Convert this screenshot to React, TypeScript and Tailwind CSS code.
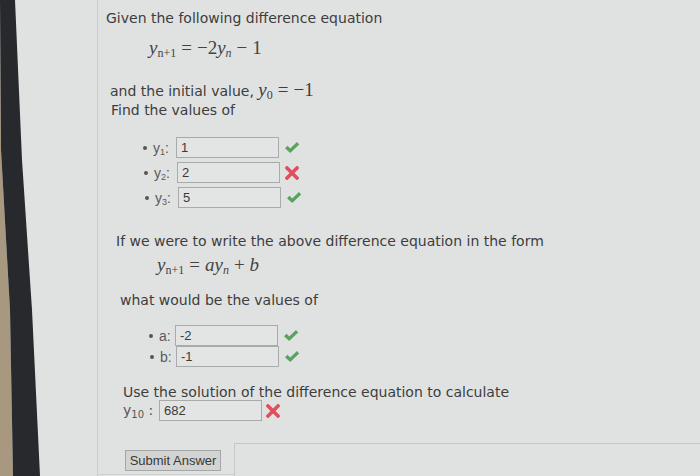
import React from "react";

const sans = "font-['DejaVu_Sans','Liberation_Sans',sans-serif]";
const arial = "font-['Liberation_Sans','DejaVu_Sans',sans-serif]";
const serif = "font-['Liberation_Serif','DejaVu_Serif',serif] italic";

function Check() {
  return (
    <svg width="16" height="13" viewBox="0 0 16 13" className="shrink-0">
      <path d="M1 7.2 L3.6 4.8 L6.2 7.4 L13 1 L15.2 3.4 L6.2 12 Z" fill="#5aa35f" />
    </svg>
  );
}

function Cross() {
  return (
    <svg width="14" height="14" viewBox="0 0 14 14" className="shrink-0">
      <path d="M2 2 L12 12 M12 2 L2 12" stroke="#e0505c" strokeWidth="3.6" strokeLinecap="square" />
    </svg>
  );
}

function Op({ children }: { children: React.ReactNode }) {
  return <span className="not-italic mx-[5px]">{children}</span>;
}

function Box({ value }: { value: string }) {
  return (
    <div className={`w-[103px] h-[21px] border border-[#a9abab] bg-[#e3e4e4] px-[4px] text-[13px] leading-[19px] text-[#3a3a3a] ${arial}`}>
      {value}
    </div>
  );
}

function Row({
  label,
  sub,
  value,
  ok,
  ml,
  lw,
}: {
  label: string;
  sub?: string;
  value: string;
  ok: boolean;
  ml: string;
  lw: string;
}) {
  return (
    <div className={`flex items-center h-[21px] ${ml}`}>
      <span className="w-[10px] flex">
        <span className="w-[4px] h-[4px] rounded-full bg-[#555]" />
      </span>
      <span className={`${lw} text-[14px] text-[#5a5a5a] leading-none ${arial}`}>
        {label}
        {sub && <sub className="text-[9px]">{sub}</sub>}:
      </span>
      <Box value={value} />
      <span className="ml-[5px] flex items-center">{ok ? <Check /> : <Cross />}</span>
    </div>
  );
}

export default function App() {
  return (
    <div className={`w-[700px] h-[476px] bg-[#e0e2e2] flex overflow-hidden ${sans}`}>
      <svg width="44" height="476" className="shrink-0">
        <polygon points="0,0 1,150 10,310 13,476 0,476" fill="#a89880" />
        <polygon points="0,0 15,0 22,160 32,310 40,476 13,476 10,310 1,150" fill="#27292c" />
      </svg>
      <div className="w-[54px] shrink-0 border-r border-[#cbcdcd]" />

      <div className="flex-1 flex flex-col text-[14px] text-[#3d3d3d]">
        <div className="mt-[8px] ml-[8px] h-[20px] leading-[20px]">Given the following difference equation</div>

        <div className={`mt-[8px] ml-[51px] h-[24px] leading-[24px] text-[19px] text-[#444] ${serif}`}>
          y<sub className="text-[12px] not-italic">n+1</sub>
          <Op>=</Op>
          <span className="not-italic">−2</span>y<sub className="text-[12px]">n</sub>
          <Op>−</Op>
          <span className="not-italic">1</span>
        </div>

        <div className="mt-[20px] ml-[12px] h-[20px] leading-[20px]">
          and the initial value, <span className={`text-[19px] ${serif}`}>y<sub className="text-[12px] not-italic">0</sub></span>
          <span className="text-[19px] font-['Liberation_Serif',serif]">
            <Op>=</Op>−1
          </span>
        </div>
        <div className="ml-[13px] h-[20px] leading-[20px]">Find the values of</div>

        <div className="mt-[17px] flex flex-col gap-[4px]">
          <Row label="y" sub="1" value="1" ok ml="ml-[45px]" lw="w-[23px]" />
          <Row label="y" sub="2" value="2" ok={false} ml="ml-[46px]" lw="w-[23px]" />
          <Row label="y" sub="3" value="5" ok ml="ml-[47px]" lw="w-[23px]" />
        </div>

        <div className="mt-[23px] ml-[18px] h-[20px] leading-[20px]">
          If we were to write the above difference equation in the form
        </div>

        <div className={`mt-[2px] ml-[59px] h-[24px] leading-[24px] text-[19px] text-[#444] ${serif}`}>
          y<sub className="text-[12px] not-italic">n+1</sub>
          <Op>=</Op>ay<sub className="text-[12px]">n</sub>
          <Op>+</Op>b
        </div>

        <div className="mt-[13px] ml-[22px] h-[20px] leading-[20px]">what would be the values of</div>

        <div className="mt-[15px] flex flex-col">
          <Row label="a" value="-2" ok ml="ml-[51px]" lw="w-[16px]" />
          <Row label="b" value="-1" ok ml="ml-[52px]" lw="w-[16px]" />
        </div>

        <div className="mt-[17px] ml-[25px] h-[16px] leading-[16px]">
          Use the solution of the difference equation to calculate
        </div>
        <div className="ml-[25px] flex items-center h-[21px]">
          <span className="w-[36px] text-[#555]">
            y<sub className="text-[10px]">10</sub> :
          </span>
          <Box value="682" />
          <span className="ml-[4px] flex items-center">
            <Cross />
          </span>
        </div>

        <div className="mt-[22px] flex flex-1 items-start">
          <div className="w-[136px] h-[32px] border-b border-[#cfd1d1] pl-[27px] pt-[7px]">
            <div className={`w-[96px] h-[21px] border border-[#a5a7a7] bg-[#d2d4d4] text-[13px] leading-[19px] text-center whitespace-nowrap text-[#383838] ${arial}`}>
              Submit Answer
            </div>
          </div>
          <div className="flex-1 self-stretch border-l border-t border-[#c7c9c9]" />
        </div>
      </div>
    </div>
  );
}
